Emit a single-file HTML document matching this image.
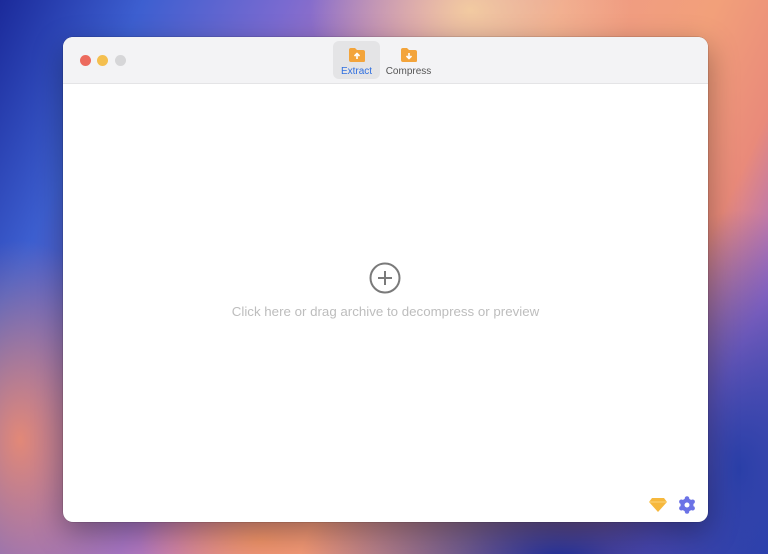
<!DOCTYPE html>
<html><head><style>
html,body{margin:0;padding:0;width:768px;height:554px;overflow:hidden;font-family:"Liberation Sans",sans-serif}
.bg{position:absolute;inset:0;background:
radial-gradient(ellipse 160px 120px at 470px 10px,rgba(246,210,160,0.9) 0%,rgba(246,200,150,0) 100%),
radial-gradient(ellipse 140px 260px at 740px 470px,#2a3fa8 0%,rgba(42,63,168,0) 100%),
radial-gradient(ellipse 260px 120px at 560px 560px,#1f2f9a 0%,rgba(31,47,154,0) 100%),
radial-gradient(ellipse 120px 200px at 20px 440px,rgba(240,140,110,0.9) 0%,rgba(240,140,110,0) 100%),
radial-gradient(ellipse 120px 60px at 260px 540px,rgba(245,150,100,0.9) 0%,rgba(245,150,100,0) 100%),
linear-gradient(115deg,#1b2a9a 0%,#3d5fd0 14%,#7a6ad0 28%,#c07ab8 42%,#ef9a86 55%,#f2a07a 70%,#e98a7a 80%,#a56ec8 88%,#3048b8 100%);}
.win{position:absolute;left:63px;top:37px;width:645px;height:485px;background:#fff;border-radius:10px;overflow:hidden;box-shadow:0 10px 30px rgba(0,0,0,0.35),0 0 0 0.5px rgba(0,0,0,0.2)}
.tb{position:absolute;left:0;top:0;right:0;height:46px;background:#f3f3f5;border-bottom:1px solid #e4e4e6}
.dot{position:absolute;top:18px;width:11px;height:11px;border-radius:50%}
.tab{position:absolute;top:4px;width:47px;height:38px;border-radius:6px;text-align:center;font-size:10px;line-height:12px}
.tab svg{display:block;margin:6px auto 3px}
</style></head><body>
<div class="bg"></div>
<div class="win">
<div class="tb">
<div class="dot" style="left:17px;background:#ec6a5e"></div>
<div class="dot" style="left:34px;background:#f4bf4f"></div>
<div class="dot" style="left:52px;background:#d6d6d8"></div>
<div class="tab" style="left:270px;background:#e4e4e6;color:#2f6fe0">
<svg width="18" height="16" viewBox="0 0 18 16"><path d="M1 3 Q1 1 3 1 H7 L9 3 H15 Q17 3 17 5 V14 Q17 15 15 15 H3 Q1 15 1 13Z" fill="#f3a43b"/><path d="M9 12 V7 M6.5 9 L9 6.5 L11.5 9" stroke="#fff" stroke-width="1.6" fill="none"/></svg>Extract</div>
<div class="tab" style="left:322px;color:#555">
<svg width="18" height="16" viewBox="0 0 18 16"><path d="M1 3 Q1 1 3 1 H7 L9 3 H15 Q17 3 17 5 V14 Q17 15 15 15 H3 Q1 15 1 13Z" fill="#f3a43b"/><path d="M9 6 V11 M6.5 9 L9 11.5 L11.5 9" stroke="#fff" stroke-width="1.6" fill="none"/></svg>Compress</div>
</div>
<svg style="position:absolute;left:306px;top:225px" width="32" height="32" viewBox="0 0 32 32"><circle cx="16" cy="16" r="14.5" stroke="#7a7a7a" stroke-width="2" fill="none"/><path d="M16 9 V23 M9 16 H23" stroke="#7a7a7a" stroke-width="2"/></svg>
<div style="position:absolute;left:0;right:0;top:267px;text-align:center;font-size:13.3px;color:#bdbdbd">Click here or drag archive to decompress or preview</div>
<svg style="position:absolute;left:585px;top:460px" width="20" height="16" viewBox="0 0 20 16"><path d="M4 1 H16 L19 5 L10 15 L1 5Z" fill="#f6b83d"/><path d="M1 5 H19" stroke="#fcd57a" stroke-width="1"/></svg>
<svg style="position:absolute;left:615px;top:459px" width="18" height="18" viewBox="0 0 18 18"><g fill="#6b72e6"><circle cx="9" cy="9" r="6.5"/><circle cx="9" cy="2.5" r="2.3"/><circle cx="9" cy="15.5" r="2.3"/><circle cx="3.4" cy="5.75" r="2.3"/><circle cx="14.6" cy="5.75" r="2.3"/><circle cx="3.4" cy="12.25" r="2.3"/><circle cx="14.6" cy="12.25" r="2.3"/></g><circle cx="9" cy="9" r="2.5" fill="#fff"/></svg>
</div>
</body></html>
